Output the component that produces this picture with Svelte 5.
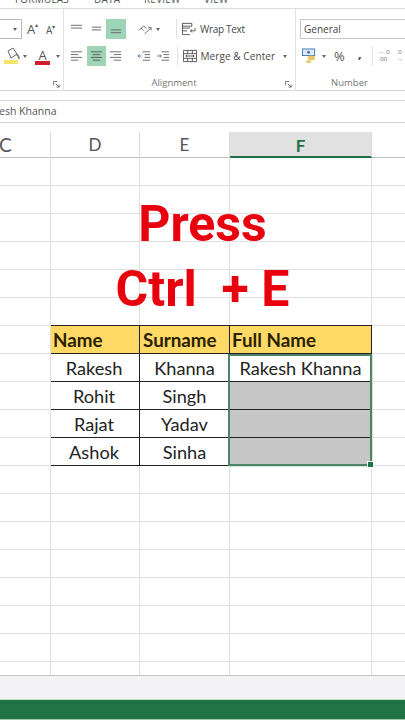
<script>
  const tabs = ['FORMULAS', 'DATA', 'REVIEW', 'VIEW'];
  const head = [
    { l: 'C', c: 'cc' },
    { l: 'D', c: 'cd' },
    { l: 'E', c: 'ce' },
    { l: 'F', c: 'cf on' },
    { l: '', c: 'cg' }
  ];
  const table = {
    6: ['Name', 'Surname', 'Full Name'],
    7: ['Rakesh', 'Khanna', 'Rakesh Khanna'],
    8: ['Rohit', 'Singh', ''],
    9: ['Rajat', 'Yadav', ''],
    10: ['Ashok', 'Sinha', '']
  };
  const rows = Array.from({ length: 19 }, (_, i) => table[i] ?? null);
</script>

<div class="app">
  <div class="tabs">
    {#each tabs as t}<span>{t}</span>{/each}
  </div>

  <div class="ribbon">
    <section class="g1">
      <div class="row">
        <div class="sizebox"><i class="arrow"></i></div>
        <span class="grow">A<sup>▴</sup></span>
        <span class="shrink">A<sup>▾</sup></span>
      </div>
      <div class="row r2">
        <svg class="ic20" viewBox="0 0 20 20">
          <path d="M6 5l5-3 4 6-6 4z" fill="#fff" stroke="#666" stroke-width="1"/>
          <path d="M14 8c2 1 3 3 3 5" fill="none" stroke="#777" stroke-width="1.4"/>
          <rect x="2" y="14" width="14" height="4" fill="#f5e56b"/>
        </svg>
        <i class="arrow a1"></i>
        <div class="fontcolor">A</div>
        <i class="arrow a2"></i>
      </div>
      <svg class="launch" viewBox="0 0 8 8"><path d="M.5 5V.5H5M3 3l4 4M7 4v3H4" fill="none" stroke="#666"/></svg>
    </section>

    <section class="g2">
      <div class="row">
        <div class="al"><svg viewBox="0 0 14 12"><path d="M1 2h12M1 5h12" stroke="#666"/></svg></div>
        <div class="al"><svg viewBox="0 0 14 12"><path d="M2 4h10M2 7h10" stroke="#666"/></svg></div>
        <div class="al sel"><svg viewBox="0 0 14 12"><path d="M2 7h11M2 10h11" stroke="#666"/></svg></div>
        <svg class="orient" viewBox="0 0 16 14"><path d="M1 8l5-5 3 3M3 5l3 3M7 12l7-7M14 5h-3M14 5v3" fill="none" stroke="#666"/></svg>
        <i class="arrow a3"></i>
        <div class="sep"></div>
        <svg class="wrapi" viewBox="0 0 15 15"><path d="M.5 1.500h10v3H.5zM.5 6.500h8M.5 9.500h5M.5 13.500h8M.5 1.500v12M14 6.500v3h-5M11 8l-2 1.500 2 1.500" fill="none" stroke="#555"/></svg>
        <span class="lbl lw">Wrap Text</span>
      </div>
      <div class="row r2">
        <div class="al"><svg viewBox="0 0 14 12"><path d="M1 1.500h12M1 4.500h8M1 7.500h12M1 10.500h8" stroke="#666"/></svg></div>
        <div class="al sel"><svg viewBox="0 0 14 12"><path d="M1 1.500h12M3 4.500h8M1 7.500h12M3 10.500h8" stroke="#555"/></svg></div>
        <div class="al"><svg viewBox="0 0 14 12"><path d="M1 1.500h12M5 4.500h8M1 7.500h12M5 10.500h8" stroke="#666"/></svg></div>
        <svg class="indent" viewBox="0 0 14 12"><path d="M6 1.500h8M8 4.500h6M8 7.500h6M6 10.500h8" stroke="#666"/><path d="M5 6H1M3 4L1 6l2 2" fill="none" stroke="#4a7fb5"/></svg>
        <svg class="indent i2" viewBox="0 0 14 12"><path d="M6 1.500h8M8 4.500h6M8 7.500h6M6 10.500h8" stroke="#666"/><path d="M1 6h5M4 4l2 2-2 2" fill="none" stroke="#4a7fb5"/></svg>
        <div class="sep s2"></div>
        <svg class="wrapi" viewBox="0 0 15 15"><path d="M.5 1.500h14v12H.5zM.5 5h14M.5 10h14M5 1.500V5M10 1.500V5M5 10v3.500M10 10v3.500M3 7.500h9M4.500 6.500l-1.500 1 1.500 1M10.500 6.500l1.500 1-1.500 1" fill="none" stroke="#555"/></svg>
        <span class="lbl lm">Merge &amp; Center</span>
        <i class="arrow a4"></i>
      </div>
      <div class="glabel">Alignment</div>
      <svg class="launch" viewBox="0 0 8 8"><path d="M.5 5V.5H5M3 3l4 4M7 4v3H4" fill="none" stroke="#666"/></svg>
    </section>

    <section class="g3">
      <div class="general">General</div>
      <div class="row r2 num">
        <svg class="money" viewBox="0 0 16 16"><rect x=".5" y=".5" width="13" height="7" fill="#dfeaf5" stroke="#3f78b0"/><circle cx="7" cy="4" r="1.500" fill="#3f78b0"/><ellipse cx="10" cy="10" rx="4" ry="2.500" fill="#e9c766"/><ellipse cx="7" cy="14" rx="3" ry="1.500" fill="#e9c766"/></svg>
        <i class="arrow a5"></i>
        <span class="pct">%</span>
        <span class="comma">,</span>
        <div class="sep s3"></div>
        <span class="dec"><b>←.0</b><b>.00</b></span>
        <span class="dec d2"><b>.0</b><b>→</b></span>
      </div>
      <div class="glabel gn">Number</div>
    </section>
  </div>

  <div class="formula"><span>esh Khanna</span></div>
  <div class="spacer"></div>

  <div class="heads">
    {#each head as h}<div class="h {h.c}">{h.l}</div>{/each}
  </div>

  <div class="sheet">
    {#each rows as r, i}
      <div class="cell c0"></div>
      {#if r}
        <div class="cell t first {i === 6 ? 'hd' : ''}">{r[0]}</div>
        <div class="cell t {i === 6 ? 'hd' : ''}">{r[1]}</div>
        <div class="cell t third {i === 6 ? 'hd' : ''} {i > 7 ? 'grey' : ''}">{r[2]}</div>
      {:else}
        <div class="cell"></div>
        <div class="cell"></div>
        <div class="cell"></div>
      {/if}
      <div class="cell c4"></div>
    {/each}
    <div class="title">
      <div>Press</div>
      <div class="l2">Ctrl&nbsp; + E</div>
    </div>
    <div class="selection"><i></i></div>
  </div>

  <div class="status"></div>
  <div class="green"></div>
</div>

<style>
  :global(body) { margin: 0; background: #fff; }
  .app { width: 405px; height: 720px; overflow: hidden; display: flex; flex-direction: column; font-family: "Open Sans", sans-serif; color: #444; background: #fff; }

  .tabs { height: 9px; flex: none; border-bottom: 1px solid #dedede; box-sizing: border-box; overflow: hidden; display: flex; font-size: 10px; line-height: 10px; color: #555; letter-spacing: .2px; }
  .tabs span { margin-top: -6px; }
  .tabs span:nth-child(1) { margin-left: 15px; width: 79px; }
  .tabs span:nth-child(2) { width: 50px; }
  .tabs span:nth-child(3) { width: 60px; }

  .ribbon { height: 82px; flex: none; box-sizing: border-box; border-bottom: 1px solid #d4d4d4; display: flex; }
  section { position: relative; box-sizing: border-box; padding-top: 10px; flex: none; }
  .g1 { width: 64px; border-right: 1px solid #e2e2e2; }
  .g2 { width: 232px; border-right: 1px solid #e2e2e2; padding-left: 3px; }
  .g3 { flex: 1; padding-left: 4px; overflow: hidden; }
  .row { height: 20px; display: flex; align-items: center; }
  .r2 { margin-top: 7px; }
  .arrow { width: 0; height: 0; flex: none; border: 2.500px solid transparent; border-top: 3px solid #666; border-bottom: 0; }

  .sizebox { width: 22px; height: 20px; border: 1px solid #bbb; border-left: 0; box-sizing: border-box; display: flex; align-items: center; justify-content: flex-end; padding-right: 4px; flex: none; }
  .grow, .shrink { position: relative; line-height: 1; color: #555; }
  .grow { font-size: 13px; margin-left: 5px; width: 18px; }
  .shrink { font-size: 10px; margin-top: 2px; margin-left: 1px; }
  sup { position: absolute; font-size: 6px; top: -1px; line-height: 1; }
  .ic20 { width: 20px; height: 20px; flex: none; margin-left: 2px; }
  .a1 { margin-left: 1px; }
  .fontcolor { width: 15px; margin-left: 8px; flex: none; text-align: center; font-size: 13px; line-height: 14px; height: 17px; color: #555; border-bottom: 4px solid #d01f2a; box-sizing: border-box; }
  .a2 { margin-left: 6px; }
  .launch { position: absolute; width: 7px; height: 7px; right: 3px; top: 72px; }

  .al { width: 19.500px; height: 20px; flex: none; display: flex; align-items: center; justify-content: center; box-sizing: border-box; }
  .al svg { width: 13px; height: 12px; }
  .sel { background: #9fd5b7; }
  .orient { width: 15px; height: 13px; margin-left: 12px; flex: none; }
  .a3 { margin-left: 3px; }
  .sep { width: 1px; height: 20px; background: #e2e2e2; margin-left: 16.500px; flex: none; }
  .s2 { margin-left: 7.500px; }
  .wrapi { width: 14px; height: 14px; margin-left: 5px; flex: none; }
  .lbl { font-size: 10px; margin-left: 4px; white-space: nowrap; color: #4a4a4a; }
  .lw { letter-spacing: -.3px; }
  .lm { letter-spacing: .08px; }
  .indent { width: 13px; height: 12px; margin-left: 11.500px; flex: none; }
  .i2 { margin-left: 6px; }
  .a4 { margin-left: 8px; }
  .glabel { font-size: 9.500px; color: #777; text-align: center; margin-top: 10px; line-height: 14px; padding-right: 14px; }
  .gn { padding-right: 6px; }

  .general { width: 120px; height: 20px; border: 1px solid #c6c6c6; box-sizing: border-box; font-size: 10px; line-height: 18px; padding-left: 3px; color: #444; }
  .num { margin-left: 2px; }
  .money { width: 15px; height: 16px; flex: none; }
  .a5 { margin-left: 5px; }
  .pct { font-size: 13px; margin-left: 8px; color: #555; width: 14px; }
  .comma { font-size: 13px; font-weight: 700; margin-left: 10px; line-height: 1; margin-top: -6px; }
  .s3 { margin-left: 10px; }
  .dec { display: flex; flex-direction: column; font-size: 6px; line-height: 7px; margin-left: 6px; color: #666; flex: none; }
  .dec b { font-weight: 400; }
  .d2 { margin-left: 7px; }

  .formula { height: 23px; flex: none; margin-top: 9px; box-sizing: border-box; border-top: 1px solid #d8d8d8; border-bottom: 1px solid #d4d4d4; font-size: 10.500px; line-height: 21px; color: #555; }
  .formula span { margin-left: -1px; }
  .spacer { height: 9px; flex: none; }

  .heads { height: 26px; flex: none; display: grid; grid-template-columns: 51px 89px 90px 142px 1fr; border-bottom: 1px solid #bdbdbd; box-sizing: border-box; }
  .h { font-size: 17px; line-height: 25px; color: #555; text-align: center; border-right: 1px solid #dcdcdc; font-family: "Lato", sans-serif; }
  .cc { text-align: left; text-indent: -1px; font-size: 19px; }
  .cg { border-right: 0; }
  .on { background: #e1e1e1; color: #217346; font-weight: 700; border-bottom: 2px solid #217346; height: 26px; box-sizing: border-box; line-height: 27px; }

  .sheet { position: relative; flex: 1; overflow: hidden; display: grid; grid-template-columns: 51px 89px 90px 142px 1fr; grid-auto-rows: 28px; min-height: 0; font-family: "Lato", sans-serif; color: #222; }
  .cell { border-right: 1px solid #e0e0e0; border-bottom: 1px solid #e0e0e0; box-sizing: border-box; }
  .c4 { border-right: 0; }
  .t { border-color: #222; text-align: center; font-size: 18.200px; line-height: 29px; white-space: nowrap; }
  .first { padding-right: 2px; }
  .hd { background: #ffd966; font-weight: 700; font-size: 18.800px; text-align: left; padding: 0 0 0 3px; color: #2a2100; border-top: 1px solid #222; margin-top: -1px; height: 29px; line-height: 28px; }
  .hd.first, .hd.third { padding-left: 2px; }
  .grey { background: #c6c6c6; }
  .title { position: absolute; left: 0; top: 34px; width: 405px; text-align: center; color: #e8000f; font-weight: 700; font-size: 50px; line-height: 65px; font-family: "Roboto", sans-serif; }
  .selection { position: absolute; left: 228px; top: 196px; width: 144px; height: 112px; box-sizing: border-box; border: 2px solid #4d8468; box-shadow: 1px 1px 0 #cfe6d9; }
  .selection i { position: absolute; right: -4px; bottom: -4px; width: 5px; height: 5px; background: #217346; border: 1px solid #fff; }

  .status { height: 24px; flex: none; background: #f3f3f5; border-top: 1px solid #c4c4c4; box-sizing: border-box; }
  .green { height: 21px; flex: none; background: #217346; border-top: 1px solid #b8e0c8; border-bottom: 1px solid #9dc8b0; box-sizing: border-box; }
</style>
